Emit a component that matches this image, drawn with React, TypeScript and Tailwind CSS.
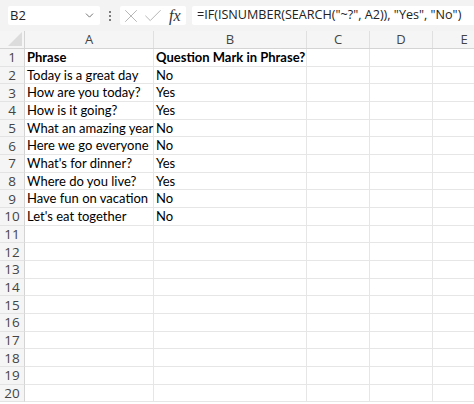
import { ChevronDown, X, Check } from "lucide-react";

const COLS = [
  { key: "A", w: "w-[129px]" },
  { key: "B", w: "w-[153px]" },
  { key: "C", w: "w-[63px]" },
  { key: "D", w: "w-[63px]" },
  { key: "E", w: "w-[63px]" },
];

const DATA: string[][] = [
  ["Phrase", "Question Mark in Phrase?"],
  ["Today is a great day", "No"],
  ["How are you today?", "Yes"],
  ["How is it going?", "Yes"],
  ["What an amazing year", "No"],
  ["Here we go everyone", "No"],
  ["What's for dinner?", "Yes"],
  ["Where do you live?", "Yes"],
  ["Have fun on vacation", "No"],
  ["Let's eat together", "No"],
];

const ROWS = Array.from({ length: 20 }, (_, i) => i + 1);

export default function App() {
  return (
    <div className="w-[474px] h-[404px] overflow-hidden bg-white" style={{ fontFamily: "'Open Sans', sans-serif" }}>
      {/* Formula bar */}
      <div className="h-[31px] bg-[#f3f3f3] flex items-center pl-[8px] gap-0">
        <div className="w-[92px] h-[19px] bg-white rounded-[2px] flex items-center justify-between pl-[2px] pr-[4px] text-[13px] text-[#222]">
          <span>B2</span>
          <ChevronDown size={13} strokeWidth={1.5} className="text-[#555]" />
        </div>
        <div className="w-[20px] flex flex-col items-center gap-[2px]">
          <span className="w-[2px] h-[2px] bg-[#555] rounded-full" />
          <span className="w-[2px] h-[2px] bg-[#555] rounded-full" />
          <span className="w-[2px] h-[2px] bg-[#555] rounded-full" />
        </div>
        <div className="w-[66px] h-[19px] bg-white rounded-[2px] flex items-center text-[#b0b0b0]">
          <X size={22} strokeWidth={1} />
          <Check size={22} strokeWidth={1} />
          <span className="ml-[5px] text-[#333] text-[16px] italic leading-none" style={{ fontFamily: "'Liberation Serif', serif" }}>fx</span>
        </div>
        <div className="ml-[6px] flex-1 h-[19px] bg-white rounded-l-[2px] flex items-center pl-[5px] text-[12.6px] text-[#222] whitespace-nowrap">
          =IF(ISNUMBER(SEARCH("~?", A2)), "Yes", "No")
        </div>
      </div>

      {/* Column headers */}
      <div className="flex h-[18px] bg-[#f5f5f5] border-b border-[#d4d4d4]">
        <div className="w-[25px] shrink-0 border-r border-[#d4d4d4] relative overflow-hidden">
          <div className="absolute right-[2px] bottom-[2px] w-0 h-0 border-l-[14px] border-l-transparent border-b-[14px] border-b-[#dcdcdc]" />
        </div>
        {COLS.map((c) => (
          <div key={c.key} className={`${c.w} shrink-0 border-r border-[#e0e0e0] flex items-center justify-center text-[13px] text-[#444]`}>
            {c.key}
          </div>
        ))}
      </div>

      {/* Rows */}
      {ROWS.map((r) => {
        const row = DATA[r - 1];
        return (
          <div key={r} className="flex h-[17.68px]">
            <div className="w-[25px] shrink-0 bg-[#f5f5f5] border-r border-[#d4d4d4] border-b border-b-[#e3e3e3] flex items-center justify-center text-[13.5px] text-[#444]">
              {r}
            </div>
            {COLS.map((c, ci) => (
              <div
                key={c.key}
                className={`${c.w} shrink-0 border-r border-b border-[#e6e6e6] flex items-center pl-[2px] text-[13px] text-black whitespace-nowrap overflow-visible leading-none ${r === 1 ? "font-bold" : ""}`}
                style={{ fontFamily: "Lato, sans-serif" }}
              >
                {row && ci < 2 ? row[ci] : ""}
              </div>
            ))}
          </div>
        );
      })}
    </div>
  );
}
